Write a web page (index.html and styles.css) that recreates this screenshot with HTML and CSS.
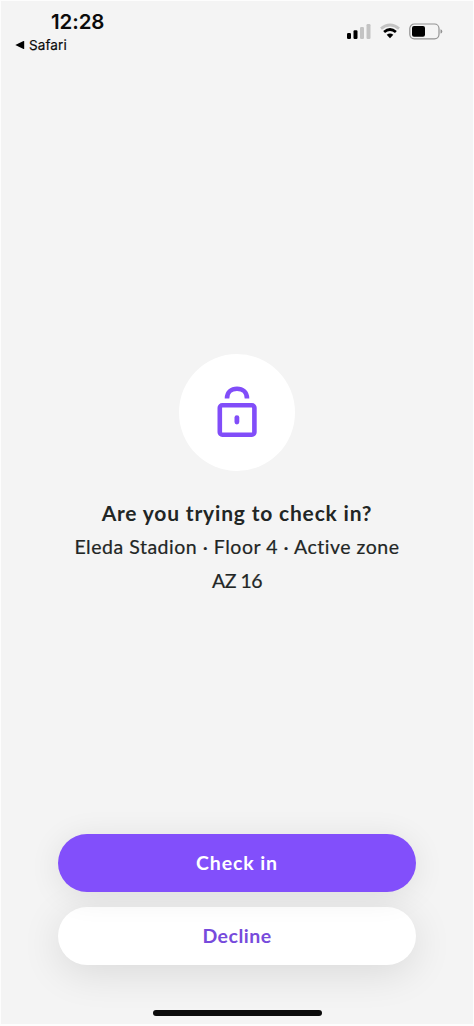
FILE: index.html
```html
<!DOCTYPE html>
<html lang="en">
<head>
<meta charset="utf-8">
<title>Check in</title>
<link rel="stylesheet" href="styles.css">
</head>
<body>
<div class="screen">
  <header class="status">
    <div class="status-left">
      <div class="time">12:28</div>
      <div class="back"><svg width="10" height="10" viewBox="0 0 10 10"><path d="M.3 5 8.500 1Q9.200 .7 9.200 1.500V8.500Q9.200 9.300 8.500 9Z"/></svg><span>Safari</span></div>
    </div>
    <svg class="status-icons" width="96" height="18" viewBox="0 0 96 18">
      <rect x="0" y="10" width="4" height="6" rx="1.2"/>
      <rect x="6.500" y="7.300" width="4" height="8.700" rx="1.200"/>
      <g fill="#c3c3c3"><rect x="13" y="4" width="4" height="12" rx="1.200"/><rect x="19.500" y="1" width="4" height="15" rx="1.200"/></g>
      <g fill="none" stroke-width="2.800"><path d="M34 5.700Q43 -1.700 52 5.700" stroke="#c3c3c3"/><path d="M37.100 9Q43 4 48.900 9" stroke="#000"/></g>
      <path d="M39.700 11.700Q43 9.200 46.300 11.700L43 15.200Z"/>
      <rect x="62.800" y="1" width="29.200" height="14.800" rx="4.500" fill="none" stroke="#929292" stroke-width="1.200"/>
      <rect x="65" y="3" width="13" height="10.800" rx="2"/>
      <path d="M93.500 6.200Q95.300 6.700 95.300 8.400T93.500 10.600Z" fill="#929292"/>
    </svg>
  </header>
  <main class="prompt">
    <div class="badge">
      <svg width="40" height="52" viewBox="0 0 40 52" fill="none" stroke="#814df9" stroke-width="4.600">
        <path d="M10 12.400C10 6 14.500 2.700 20 2.700S30 6 30 12.400"/>
        <rect x="2.800" y="19.300" width="34.600" height="29.400" rx="2.500"/>
        <path d="M19.900 31.600V36" stroke-width="4.800" stroke-linecap="round"/>
      </svg>
    </div>
    <h1><span class="title-text">Are you trying to check in?</span></h1>
    <p><span class="place-text">Eleda Stadion · Floor 4 · Active zone</span><br><span class="zone-text">AZ 16</span></p>
  </main>
  <footer class="actions">
    <button class="btn primary"><span>Check in</span></button>
    <button class="btn secondary"><span>Decline</span></button>
    <div class="home-bar"></div>
  </footer>
</div>
</body>
</html>
```
FILE: styles.css
```css
* { box-sizing: border-box; margin: 0; padding: 0; }
body { background: #fdfdfd; padding: 1px 1px 2px 1px; height: 1026px; overflow: hidden; }
.screen {
  height: 1023px;
  background: #f4f4f4;
  display: flex;
  flex-direction: column;
  font-family: Lato, sans-serif;
  color: #222625;
}
.status {
  height: 353px;
  display: flex;
  justify-content: space-between;
  padding: 8px 30px 0 14px;
  font-family: Inter, sans-serif;
  color: #0b0b0b;
}
.time { font-size: 20.5px; line-height: 26px; font-weight: 600; padding-left: 36px; letter-spacing: -.1px; }
.back { display: flex; align-items: center; gap: 4px; font-size: 13.5px; line-height: 18px; padding-top: 1px; letter-spacing: .1px; -webkit-text-stroke: .2px; }
.status-icons { margin-top: 14px; }
.prompt { height: 480px; text-align: center; display: flex; flex-direction: column; align-items: center; }
.badge {
  width: 116px;
  height: 117px;
  border-radius: 50%;
  background: #fff;
  display: flex;
  align-items: center;
  justify-content: center;
  padding-bottom: 2px;
  margin-bottom: 25px;
}
h1 { font-size: 21px; line-height: 34px; font-weight: 700; white-space: nowrap; }
p { font-size: 19.5px; line-height: 33.500px; white-space: nowrap; -webkit-text-stroke: .2px; }
.title-text { letter-spacing: .82px; }
.place-text { letter-spacing: .52px; }
.zone-text { letter-spacing: -.5px; }
.actions { display: flex; flex-direction: column; align-items: center; }
.btn {
  width: 358px;
  height: 58px;
  border: 0;
  border-radius: 29px;
  font: 700 19.5px/58px Lato, sans-serif;
  letter-spacing: .5px;
  box-shadow: 0 8px 40px rgba(0, 0, 0, .11);
}
.primary { position: relative; z-index: 1; background: #824ffb; color: #fff; letter-spacing: .9px; box-shadow: 0 4px 32px rgba(0, 0, 0, .09); }
.secondary { margin-top: 15px; background: #fff; color: #774bdc; }
.home-bar { width: 169px; height: 6px; border-radius: 3px; background: #0b0b0b; margin-top: 45px; }
```
